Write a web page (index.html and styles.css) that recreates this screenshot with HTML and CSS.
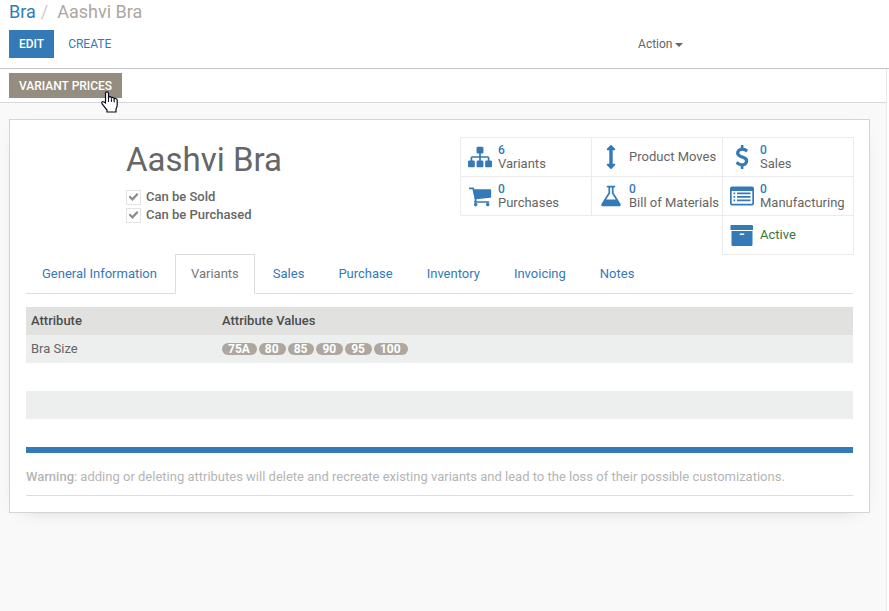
FILE: index.html
```html
<!DOCTYPE html>
<html lang="en">
<head>
    <meta charset="UTF-8">
    <meta name="viewport" content="width=device-width, initial-scale=1.0">
    <title>Aashvi Bra</title>
    <link rel="stylesheet" href="styles.css">
</head>
<body>
    <header class="control-panel">
        <nav class="breadcrumb">
            <a href="#">Bra</a>
            <span class="breadcrumb__sep">/</span>
            <span class="breadcrumb__current">Aashvi Bra</span>
        </nav>
        <div class="control-panel__row">
            <div class="control-panel__buttons">
                <button class="btn btn--primary" type="button">EDIT</button>
                <button class="btn btn--link" type="button">CREATE</button>
            </div>
            <div class="control-panel__actions">
                <button class="dropdown" type="button">Action <span class="caret"></span></button>
            </div>
        </div>
    </header>

    <main class="content">
        <div class="statusbar">
            <button class="btn btn--status" type="button">VARIANT PRICES
                <svg class="pointer" viewBox="0 0 17 22" aria-hidden="true">
                    <path d="M4.500 12V2.500Q4.500.8 6 .8T7.500 2.500V7Q7.700 5.600 9 5.700T10.400 7.300Q10.700 6.100 11.900 6.300T13.200 8Q13.600 7.200 14.800 7.500T16.200 9.200V14Q16.200 16 15 18V21H6V19L1.500 13.500Q.300 11.500 1 10.800T3 11Z" fill="#fff" stroke="#0b0b1e" stroke-width="1.200"/>
                    <path d="M7.500 7v4M10.400 7.500v3.500M13.200 8.500v3" stroke="#0b0b1e" fill="none"/>
                </svg>
            </button>
        </div>

        <div class="sheet">
            <div class="sheet__top">
                <div class="product">
                    <h1 class="product__name">Aashvi Bra</h1>
                    <label class="check"><input type="checkbox" checked disabled> Can be Sold</label>
                    <label class="check"><input type="checkbox" checked disabled> Can be Purchased</label>
                </div>

                <div class="stats">
                    <button class="stat" type="button">
                        <svg class="stat__icon" viewBox="0 0 1792 1792"><path d="M1792 1248v320q0 40-28 68t-68 28h-320q-40 0-68-28t-28-68v-320q0-40 28-68t68-28h96v-192h-512v192h96q40 0 68 28t28 68v320q0 40-28 68t-68 28h-320q-40 0-68-28t-28-68v-320q0-40 28-68t68-28h96v-192h-512v192h96q40 0 68 28t28 68v320q0 40-28 68t-68 28h-320q-40 0-68-28t-28-68v-320q0-40 28-68t68-28h96v-192q0-52 38-90t90-38h512v-192h-96q-40 0-68-28t-28-68v-320q0-40 28-68t68-28h320q40 0 68 28t28 68v320q0 40-28 68t-68 28h-96v192h512q52 0 90 38t38 90v192h96q40 0 68 28t28 68z"/></svg>
                        <span class="stat__text"><b>6</b>Variants</span>
                    </button>
                    <button class="stat" type="button">
                        <svg class="stat__icon" viewBox="0 0 1792 1792"><path d="M1216 320q0 26-19 45t-45 19h-128v1024h128q26 0 45 19t19 45-19 45l-256 256q-19 19-45 19t-45-19l-256-256q-19-19-19-45t19-45 45-19h128v-1024h-128q-26 0-45-19t-19-45 19-45l256-256q19-19 45-19t45 19l256 256q19 19 19 45z"/></svg>
                        <span class="stat__text">Product Moves</span>
                    </button>
                    <button class="stat" type="button">
                        <svg class="stat__icon" viewBox="0 0 1792 1792"><path d="M1362 1185q0 153-99.500 263.500t-258.500 136.500v175q0 14-9 23t-23 9h-135q-13 0-22.500-9.500t-9.500-22.500v-175q-66-9-127.500-31t-101.500-44.500-74-48-46.500-37.500-17.500-18q-17-21-2-41l103-135q7-10 23-12 15-2 24 9l2 2q113 99 243 125 37 8 74 8 81 0 142.500-43t61.500-122q0-28-15-53t-33.500-42-58.500-37.500-66-32-80-32.500q-39-16-61.500-25t-61.500-26.500-62.500-31-56.500-35.500-53.500-42.500-43.500-49-35.500-58-21-66.500-8.500-78q0-138 98-242t255-134v-180q0-13 9.500-22.500t22.500-9.500h135q14 0 23 9t9 23v176q57 6 110.500 23t87 33.500 63.500 37.500 39 29 15 14q17 18 5 38l-81 146q-8 15-23 16-14 3-27-7-3-3-14.500-12t-39-26.500-58.500-32-74.500-26-85.500-11.500q-95 0-155 43t-60 111q0 26 8.500 48t29.500 41.500 39.500 33 56 31 60.500 27 70 27.500q53 20 81 31.500t76 35 75.500 42.500 62 50 53 63.500 31.500 76.500 13 94z"/></svg>
                        <span class="stat__text"><b>0</b>Sales</span>
                    </button>
                    <button class="stat" type="button">
                        <svg class="stat__icon" viewBox="0 0 1792 1792"><path d="M704 1536q0 52-38 90t-90 38-90-38-38-90 38-90 90-38 90 38 38 90zm896 0q0 52-38 90t-90 38-90-38-38-90 38-90 90-38 90 38 38 90zm128-1088v512q0 24-16.500 42.500t-40.500 21.500l-1044 122q13 60 13 70 0 16-24 64h920q26 0 45 19t19 45-19 45-45 19h-1024q-26 0-45-19t-19-45q0-11 8-31.500t16-36 21.500-40 15.500-29.500l-177-823h-204q-26 0-45-19t-19-45 19-45 45-19h256q16 0 28.500 6.500t19.500 15.500 13 24.500 8 26 5.500 29.500 4.500 26h1201q26 0 45 19t19 45z"/></svg>
                        <span class="stat__text"><b>0</b>Purchases</span>
                    </button>
                    <button class="stat" type="button">
                        <svg class="stat__icon" viewBox="0 0 1792 1792"><path d="M1591 1448q56 89 21.500 152.500t-140.500 63.500h-1152q-106 0-140.500-63.500t21.500-152.500l503-793v-399h-64q-26 0-45-19t-19-45 19-45 45-19h512q26 0 45 19t19 45-19 45-45 19h-64v399zm-779-725l-272 429h712l-272-429-20-31v-436h-128v436z"/></svg>
                        <span class="stat__text"><b>0</b>Bill of Materials</span>
                    </button>
                    <button class="stat" type="button">
                        <svg class="stat__icon" viewBox="0 0 24 24"><path fill-rule="evenodd" d="M2 2.500h20q2 0 2 2v15q0 2-2 2H2q-2 0-2-2v-15q0-2 2-2zM1.700 7v12.300q0 .5.500.5h19.600q.5 0 .5-.5V7zM3.500 8.500h1.700v1.700H3.500zM3.500 12h1.700v1.700H3.500zM3.500 15.500h1.700v1.700H3.500zM7 8.500h13.500v1.700H7zM7 12h13.500v1.700H7zM7 15.500h13.500v1.700H7z"/></svg>
                        <span class="stat__text"><b>0</b>Manufacturing</span>
                    </button>
                    <button class="stat stat--last" type="button">
                        <svg class="stat__icon" viewBox="0 0 24 24"><path fill-rule="evenodd" d="M1 2h21q1 0 1 1v4H1Q.500 7 .500 6.500V3Q.500 2 1 2zM1.500 8h21v14q0 1-1 1h-19q-1 0-1-1zM10 10.500q-1 .7 0 1.500h4q1-.8 0-1.500z"/></svg>
                        <span class="stat__text stat__text--active">Active</span>
                    </button>
                </div>
            </div>

            <nav class="tabs">
                <a class="tab" href="#">General Information</a>
                <a class="tab tab--active" href="#">Variants</a>
                <a class="tab" href="#">Sales</a>
                <a class="tab" href="#">Purchase</a>
                <a class="tab" href="#">Inventory</a>
                <a class="tab" href="#">Invoicing</a>
                <a class="tab" href="#">Notes</a>
            </nav>

            <table class="list">
                <thead>
                    <tr><th class="list__attribute">Attribute</th><th>Attribute Values</th></tr>
                </thead>
                <tbody>
                    <tr>
                        <td>Bra Size</td>
                        <td>
                            <div class="tags">
                                <span class="tag">75A</span>
                                <span class="tag">80</span>
                                <span class="tag">85</span>
                                <span class="tag">90</span>
                                <span class="tag">95</span>
                                <span class="tag">100</span>
                            </div>
                        </td>
                    </tr>
                    <tr><td colspan="2"></td></tr>
                    <tr><td colspan="2"></td></tr>
                    <tr><td colspan="2"></td></tr>
                </tbody>
            </table>

            <p class="warning"><b>Warning</b>: adding or deleting attributes will delete and recreate existing variants and lead to the loss of their possible customizations.</p>
        </div>
    </main>
</body>
</html>
```
FILE: styles.css
```css
* {
    box-sizing: border-box;
}

body {
    margin: 0;
    min-height: 100vh;
    display: flex;
    flex-direction: column;
    font-family: Roboto, "Liberation Sans", sans-serif;
    font-size: 13px;
    line-height: 18px;
    color: #666;
    background: #fff;
}

a {
    color: #337ab7;
    text-decoration: none;
}

button {
    font: inherit;
    cursor: pointer;
}

b,
th {
    font-weight: 500;
}

/* control panel */
.control-panel {
    padding: 0 11px 10px 9px;
    border-bottom: 1px solid #c3c3c3;
}

.breadcrumb {
    display: flex;
    gap: 5px;
    height: 30px;
    font-size: 18px;
    line-height: 24px;
}

.breadcrumb__sep {
    color: #ccc;
}

.breadcrumb__current {
    margin-left: 4px;
    color: #aea79f;
}

.control-panel__row {
    display: grid;
    grid-template-columns: 1fr 1fr;
    align-items: center;
}

.control-panel__buttons {
    display: flex;
    gap: 4px;
}

.control-panel__actions {
    text-align: center;
}

.btn {
    padding: 5px 10px;
    border: 0;
    font-size: 12px;
    color: #fff;
}

.btn--primary {
    font-weight: 500;
    background: #337ab7;
}

.btn--link {
    color: #337ab7;
    background: none;
}

.btn--status {
    position: relative;
    padding: 4px 10px 3px;
    font-weight: 500;
    background: #968d81;
}

.pointer {
    position: absolute;
    top: 18px;
    right: 4px;
    width: 17px;
    height: 22px;
}

.dropdown {
    padding: 0;
    border: 0;
    font-size: 12px;
    color: #666;
    background: none;
}

.caret {
    display: inline-block;
    vertical-align: middle;
    border-top: 4px solid #666;
    border-left: 4px solid transparent;
    border-right: 4px solid transparent;
}

/* form */
.content {
    flex: 1;
    margin-right: 2px;
    border-right: 1px solid #e9e9e9;
    background: #f9f9f9;
}

.statusbar {
    display: flex;
    padding: 4px 9px;
    border-bottom: 1px solid #d9d9d9;
    background: #fff;
}

.sheet {
    margin: 16px 16px 16px 9px;
    padding: 16px;
    border: 1px solid #d5d5d5;
    background: #fff;
    box-shadow: 0 5px 20px -15px rgba(0, 0, 0, 0.4);
}

.sheet__top {
    display: flex;
    justify-content: space-between;
    align-items: flex-start;
}

.product {
    padding: 4px 0 0 100px;
}

.product__name {
    margin: 0 0 8px;
    font-size: 33px;
    font-weight: 400;
    line-height: 40px;
}

.check {
    display: flex;
    align-items: center;
    gap: 5px;
    font-weight: 500;
}

.check input {
    appearance: none;
    display: grid;
    place-items: center;
    width: 15px;
    height: 15px;
    margin: 0;
    border: 1px solid #e3e3e3;
}

.check input:checked::after {
    content: "";
    width: 10px;
    height: 8px;
    background: #8c8c8c;
    clip-path: polygon(0 50%, 16% 32%, 38% 58%, 84% 0, 100% 20%, 40% 100%);
}

.stats {
    display: grid;
    grid-template-columns: repeat(3, 131px);
    margin-right: -1px;
    padding: 1px 0 0 1px;
}

.stat {
    display: flex;
    align-items: center;
    gap: 6px;
    height: 40px;
    margin: 0 0 -1px -1px;
    padding: 0 0 0 7px;
    border: 1px solid #ebebeb;
    text-align: left;
    color: #666;
    background: #fff;
}

.stat--last {
    grid-column: 3;
}

.stat__icon {
    flex: none;
    width: 24px;
    height: 24px;
    fill: #337ab7;
}

.stat__text {
    line-height: 14px;
    white-space: nowrap;
}

.stat__text b {
    display: block;
    font-size: 12px;
    color: #337ab7;
}

.stat__text--active {
    color: #3c763d;
}

.tabs {
    display: flex;
    gap: 2px;
    border-bottom: 1px solid #ddd;
}

.tab {
    margin-bottom: -1px;
    padding: 10px 15px;
    border: 1px solid transparent;
}

.tab--active {
    border-color: #ddd;
    border-bottom-color: #fff;
    color: #777;
    background: #fff;
}

.list {
    width: 100%;
    margin-top: 13px;
    border-spacing: 0;
    border-bottom: 6px solid #337ab7;
}

.list th,
.list td {
    height: 28px;
    padding: 5px;
    text-align: left;
}

.list th {
    color: #4c4c4c;
    background: #e1e1e0;
}

.list__attribute {
    width: 191px;
}

.list tbody tr:nth-child(odd) {
    background: #edeeee;
}

.tags {
    display: flex;
    gap: 2px;
}

.tag {
    padding: 0 7px 0 6px;
    border-radius: 6px;
    font-size: 12px;
    font-weight: 700;
    line-height: 12px;
    color: #fff;
    background: #aea79f;
}

.warning {
    margin: 0;
    padding: 15px 0 9px;
    border-bottom: 1px solid #ddd;
    color: #b5b5b5;
}
```
